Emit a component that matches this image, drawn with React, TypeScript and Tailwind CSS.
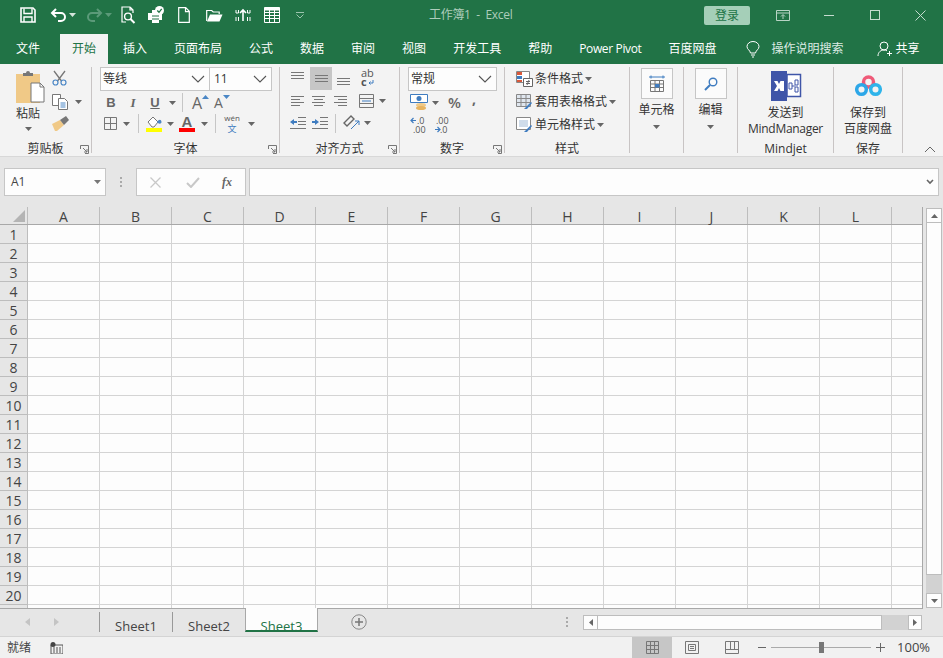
import React from "react";

const tabs = ["开始", "插入", "页面布局", "公式", "数据", "审阅", "视图", "开发工具", "帮助", "Power Pivot", "百度网盘"];
const columns = ["A", "B", "C", "D", "E", "F", "G", "H", "I", "J", "K", "L"];
const rows = Array.from({ length: 20 }, (_, i) => i + 1);

const Caret = ({ color = "#666" }: { color?: string }) => (
  <svg width="7" height="4" viewBox="0 0 7 4" className="shrink-0">
    <path d="M0 0h7L3.5 4z" fill={color} />
  </svg>
);

const Chevron = () => (
  <svg width="14" height="8" viewBox="0 0 14 8" className="shrink-0">
    <path d="M1 1l6 6 6-6" fill="none" stroke="#555" strokeWidth="1.1" />
  </svg>
);

const Launcher = () => (
  <svg width="9" height="9" viewBox="0 0 9 9" className="absolute right-[2px] bottom-[-1px]">
    <path d="M.5 4V.5H8.5V8.5H5M3 3l4 4M7 4v3H4" fill="none" stroke="#777" />
  </svg>
);

const VSep = () => <div className="h-[19px] w-px bg-[#c6c6c6] shrink-0" />;

const Lines = ({ d }: { d: string }) => (
  <svg width="15" height="15" viewBox="0 0 15 15" className="shrink-0">
    <path d={d} fill="none" stroke="#777" />
  </svg>
);

const Group = ({
  label,
  width,
  launcher,
  children,
}: {
  label: string;
  width: string;
  launcher?: boolean;
  children: React.ReactNode;
}) => (
  <div className={`${width} relative h-[86px] border-r border-[#c8c4c4] flex flex-col shrink-0`}>
    <div className="h-[69px]">{children}</div>
    <div className="h-[17px] pt-[5px] leading-[16px] text-center text-[12px] text-[#333]">{label}</div>
    {launcher && <Launcher />}
  </div>
);

function TitleBar() {
  return (
    <div className="h-[30px] flex items-center bg-[#217346] relative">
      <div className="flex items-center pl-[20px]">
        <svg width="16" height="16" viewBox="0 0 16 16">
          <path d="M1 1h12l2 2v12H1z" fill="none" stroke="#fff" strokeWidth="1.6" />
          <path d="M4 1.5v5h8v-5M4 15v-5h8v5" fill="none" stroke="#fff" strokeWidth="1.4" />
        </svg>
        <svg width="17" height="14" viewBox="0 0 17 14" className="ml-[14px]">
          <path d="M6 1L2 5l4 4M2 5h9a3.6 3.6 0 0 1 0 8H8" fill="none" stroke="#fff" strokeWidth="2" />
        </svg>
        <div className="ml-[2px]"><Caret color="#d5e5dc" /></div>
        <svg width="16" height="14" viewBox="0 0 16 14" className="ml-[11px]">
          <path d="M10 1l4 4-4 4M14 5H5a3.6 3.6 0 0 0 0 8h3" fill="none" stroke="#5b9a79" strokeWidth="2" />
        </svg>
        <div className="ml-[2px]"><Caret color="#5b9a79" /></div>
        <svg width="16" height="18" viewBox="0 0 16 18" className="ml-[8px]">
          <path d="M10 1H2v15h4M10 1l3 3v3M10 1v3h3" fill="none" stroke="#fff" strokeWidth="1.2" />
          <circle cx="8" cy="10.5" r="3.4" fill="none" stroke="#fff" strokeWidth="1.4" />
          <path d="M10.5 13l4 4" stroke="#fff" strokeWidth="2" />
        </svg>
        <svg width="18" height="18" viewBox="0 0 18 18" className="ml-[11px]">
          <path d="M1 7h4V4h7v3h3v7h-3v3H5v-3H1z" fill="#fff" />
          <circle cx="12.5" cy="4.5" r="4.5" fill="#fff" />
          <path d="M10.3 4.5l1.7 1.8 2.7-3.4" fill="none" stroke="#217346" strokeWidth="1.3" />
          <path d="M5 10h7M5 13h7" stroke="#217346" />
        </svg>
        <svg width="12" height="16" viewBox="0 0 12 16" className="ml-[13px]">
          <path d="M.7.7h7l3.6 3.6v11H.7zM7.5.7v4h3.8" fill="none" stroke="#fff" strokeWidth="1.2" />
        </svg>
        <svg width="17" height="13" viewBox="0 0 17 13" className="ml-[16px]">
          <path d="M.7 12V1.5h5l1.5 1.5h6v2" fill="none" stroke="#fff" strokeWidth="1.2" />
          <path d="M1 12.5L4 5.5h12.5l-3 7z" fill="#fff" />
        </svg>
        <svg width="16" height="14" viewBox="0 0 16 14" className="ml-[12px]">
          <path d="M8 13V2M5 5l3-3 3 3" fill="none" stroke="#fff" strokeWidth="1.6" />
          <path d="M1 2v3h2.5V2M12.5 2v3H15V2M1 9v4M3.5 9v4M12.5 9v4M15 9v4" fill="none" stroke="#fff" />
        </svg>
        <svg width="16" height="16" viewBox="0 0 16 16" className="ml-[13px]">
          <path d="M.5.500h15v15H.5zM.5 5.5h15M.5 8.5h15M.5 11.5h15M5.500 3v12.500M10.500 3v12.500" fill="none" stroke="#fff" />
          <path d="M.5.500h15v3H.5z" fill="#fff" />
        </svg>
        <svg width="10" height="7" viewBox="0 0 10 7" className="ml-[15px]">
          <path d="M1 .5h8M1.500 2.500L5 6l3.500-3.500" fill="none" stroke="#9cc5ae" />
        </svg>
      </div>
      <div className="absolute left-[429px] text-[12px] tracking-[-0.3px] text-[#aecdbb] whitespace-nowrap">工作簿1&nbsp; -&nbsp; Excel</div>
      <div className="ml-auto flex items-center pr-[17px]">
        <div className="w-[46px] h-[19px] rounded-[2px] bg-[#a5cfb8] text-[#217346] text-[12px] leading-[19px] text-center">登录</div>
        <svg width="14" height="11" viewBox="0 0 14 11" className="ml-[26px]">
          <path d="M.5.500h13v10H.5zM.5 3h13M7 9V5M5 6.500L7 4.500l2 2" fill="none" stroke="#b8d4c5" />
        </svg>
        <div className="ml-[34px] w-[10px] h-px bg-[#c5dcd0]" />
        <div className="ml-[36px] w-[10px] h-[10px] border border-[#c5dcd0]" />
        <svg width="11" height="11" viewBox="0 0 11 11" className="ml-[35px]">
          <path d="M.5.500l10 10M10.500.5l-10 10" stroke="#c5dcd0" />
        </svg>
      </div>
    </div>
  );
}

function TabBar() {
  return (
    <div className="h-[34px] flex items-end bg-[#217346] text-[12px] text-white relative">
      <div className="px-[12px] ml-[4px] mr-[8px] h-[30px] leading-[30px]">文件</div>
      <div className="flex gap-[3px]">
        {tabs.map((t, i) => (
          <div
            key={t}
            className={
              i === 0
                ? "h-[30px] px-[12px] leading-[30px] bg-[#f3f3f3] text-[#217346] whitespace-nowrap"
                : i === 9
                  ? "h-[30px] px-[12px] leading-[30px] tracking-[-0.35px] whitespace-nowrap"
                  : "h-[30px] px-[12px] leading-[30px] whitespace-nowrap"
            }
          >
            {t}
          </div>
        ))}
      </div>
      <div className="ml-[17px] h-[30px] flex items-center">
        <svg width="14" height="17" viewBox="0 0 14 17">
          <path d="M4.500 12C4 9 1 8.500 1 5.500a6 5 0 0 1 12 0C13 8.500 10 9 9.500 12zM5 14h4M6 16h2" fill="none" stroke="#fff" />
        </svg>
        <span className="ml-[12px] text-[12px] text-[#dcebe3] whitespace-nowrap">操作说明搜索</span>
        <svg width="16" height="16" viewBox="0 0 16 16" className="ml-[33px]">
          <circle cx="7" cy="5" r="4" fill="none" stroke="#fff" />
          <path d="M1 15c0-4 3-6 6-6 1 0 2 .2 3 .8M12.500 10v5M10 12.500h5" fill="none" stroke="#fff" />
        </svg>
        <span className="ml-[3px]">共享</span>
      </div>
    </div>
  );
}

function ClipboardGroup() {
  return (
    <Group label="剪贴板" width="w-[92px]" launcher>
      <div className="flex">
        <div className="w-[52px] flex flex-col items-center pl-[4px]">
          <svg width="29" height="32" viewBox="0 0 29 32" className="mt-[4px] ml-[4px] shrink-0">
            <path d="M0 3h24v29H0z" fill="#f0c987" />
            <path d="M7 5V2h3a2 2 0 0 1 4 0h3v3z" fill="#777" />
            <path d="M15 12h9l4 4v15H15z" fill="#fff" stroke="#777" />
            <path d="M24 12v4h4" fill="none" stroke="#777" />
          </svg>
          <div className="text-[12px] leading-[16px] mt-[3px] text-[#333]">粘贴</div>
          <div className="mt-[5px]"><Caret /></div>
        </div>
        <div className="flex flex-col">
          <svg width="15" height="16" viewBox="0 0 15 16" className="mt-[3px] shrink-0">
            <path d="M2 1l7.500 10M13 1L5.500 11" stroke="#777" strokeWidth="1.3" />
            <circle cx="3.500" cy="12.500" r="2.500" fill="none" stroke="#4a86c5" strokeWidth="1.2" />
            <circle cx="11.500" cy="12.500" r="2.500" fill="none" stroke="#4a86c5" strokeWidth="1.2" />
          </svg>
          <div className="flex items-center mt-[8px] gap-[6px]">
            <svg width="17" height="16" viewBox="0 0 17 16">
              <path d="M.5.500h8v11h-8z" fill="#fff" stroke="#777" />
              <path d="M6.500 4.500h6l3 3v8h-9z" fill="#fff" stroke="#777" />
              <path d="M8.500 9h5M8.500 11h5M8.500 13h5" stroke="#4a86c5" />
            </svg>
            <Caret />
          </div>
          <svg width="17" height="15" viewBox="0 0 17 15" className="mt-[6px] shrink-0">
            <path d="M0 8l8-4 4 5-7 6H3z" fill="#f0c987" />
            <path d="M8 4l6-4 3 4-5 5z" fill="#777" />
          </svg>
        </div>
      </div>
    </Group>
  );
}

function FontGroup() {
  return (
    <Group label="字体" width="w-[188px]" launcher>
      <div className="pl-[8px] flex flex-col">
        <div className="flex h-[24px] text-[12px] text-[#333]">
          <div className="w-[110px] flex items-center justify-between pl-[2px] pr-[4px] border border-[#c6c6c6] bg-[#fdfdfd]">
            等线
            <Chevron />
          </div>
          <div className="w-[62px] flex items-center justify-between pl-[4px] pr-[4px] border border-[#c6c6c6] border-l-0 bg-[#fdfdfd]">
            11
            <Chevron />
          </div>
        </div>
        <div className="flex items-center h-[21px] mt-[1px] text-[#666]">
          <div className="w-[22px] text-center text-[13px] font-bold [font-family:'Liberation_Sans',sans-serif]">B</div>
          <div className="w-[22px] text-center text-[13px] font-bold italic [font-family:'Liberation_Serif',serif]">I</div>
          <div className="w-[22px] text-center text-[13px] font-bold underline [font-family:'Liberation_Sans',sans-serif]">U</div>
          <div className="w-[12px] flex justify-center"><Caret /></div>
          <div className="ml-[4px]"><VSep /></div>
          <div className="ml-[9px] flex text-[16px] leading-[16px] w-[20px]">
            A
            <svg width="7" height="4" viewBox="0 0 7 4"><path d="M3.500 0L7 4H0z" fill="#4a86c5" /></svg>
          </div>
          <div className="ml-[2px] flex text-[14px] leading-[16px] items-end">
            A
            <svg width="7" height="4" viewBox="0 0 7 4" className="mb-[12px]"><path d="M0 0h7L3.500 4z" fill="#4a86c5" /></svg>
          </div>
        </div>
        <div className="flex items-center h-[21px]">
          <svg width="13" height="13" viewBox="0 0 13 13" className="ml-[4px]">
            <path d="M.5.500h12v12H.5zM6.500.5v12M.5 6.500h12" fill="none" stroke="#777" />
          </svg>
          <div className="ml-[6px]"><Caret /></div>
          <div className="ml-[8px]"><VSep /></div>
          <div className="ml-[7px] flex flex-col items-center">
            <svg width="16" height="12" viewBox="0 0 16 12">
              <path d="M2 6l5-5 5 5-4 5H6z" fill="#fff" stroke="#777" />
              <path d="M11 6c2-3 4-3 4.500 0 0 2-3 2.500-4.500 0z" fill="#4a86c5" />
            </svg>
            <div className="w-[16px] h-[4px] bg-[#ffff00]" />
          </div>
          <div className="ml-[5px]"><Caret /></div>
          <div className="ml-[5px] flex flex-col items-center w-[16px]">
            <div className="text-[15px] leading-[12px] font-bold text-[#666] [font-family:'Liberation_Sans',sans-serif]">A</div>
            <div className="w-[16px] h-[4px] bg-[#ff0000]" />
          </div>
          <div className="ml-[6px]"><Caret /></div>
          <div className="ml-[7px]"><VSep /></div>
          <div className="ml-[8px] flex flex-col items-center w-[16px]">
            <div className="text-[8px] leading-[10px] text-[#555]">wén</div>
            <div className="text-[9px] leading-[11px] text-[#3f7cc0]">文</div>
          </div>
          <div className="ml-[8px]"><Caret /></div>
        </div>
      </div>
    </Group>
  );
}

function AlignGroup() {
  return (
    <Group label="对齐方式" width="w-[120px]" launcher>
      <div className="pl-[10px] flex flex-col">
        <div className="flex items-center h-[23px]">
          <div className="w-[20px]"><Lines d="M1 1.500h13M1 4.500h13M1 7.500h13" /></div>
          <div className="w-[22px] h-[23px] bg-[#c6c6c6] flex items-center justify-center"><Lines d="M1 4.500h13M1 7.500h13M1 10.500h13" /></div>
          <div className="w-[26px] pl-[4px]"><Lines d="M1 7.500h13M1 10.500h13M1 13.500h13" /></div>
          <svg width="14" height="18" viewBox="0 0 14 18" className="ml-[2px] -mt-[2px] overflow-visible">
            <text x="1" y="8" fontSize="11" fill="#555">ab</text>
            <text x="1" y="17" fontSize="11" fontWeight="700" fill="#555">c</text>
            <path d="M13 11v3H9M10.500 12.500L9 14l1.500 1.500" fill="none" stroke="#3f7cc0" />
          </svg>
        </div>
        <div className="flex items-center h-[21px]">
          <div className="w-[21px]"><Lines d="M1 3.500h13M1 6.500h9M1 9.500h13M1 12.500h9" /></div>
          <div className="w-[22px]"><Lines d="M1 3.500h13M3 6.500h9M1 9.500h13M3 12.500h9" /></div>
          <div className="w-[26px]"><Lines d="M1 3.500h13M5 6.500h9M1 9.500h13M5 12.500h9" /></div>
          <svg width="15" height="14" viewBox="0 0 15 14">
            <path d="M.5.500h14v13H.5zM.5 4.500h14M.5 9.500h14" fill="none" stroke="#777" />
            <path d="M3 7h9" stroke="#3f7cc0" />
          </svg>
          <div className="ml-[5px]"><Caret /></div>
        </div>
        <div className="flex items-center h-[24px]">
          <svg width="16" height="12" viewBox="0 0 16 12">
            <path d="M8 .5h8M8 4.500h8M8 7.500h8M0 11.500h16" stroke="#777" />
            <path d="M0 5l4-3v2h3v2H4v2z" fill="#3f7cc0" />
          </svg>
          <svg width="16" height="12" viewBox="0 0 16 12" className="ml-[6px]">
            <path d="M8 .5h8M8 4.500h8M8 7.500h8M0 11.500h16" stroke="#777" />
            <path d="M7 5L3 2v2H0v2h3v2z" fill="#3f7cc0" />
          </svg>
          <div className="ml-[7px]"><VSep /></div>
          <svg width="18" height="16" viewBox="0 0 18 16" className="ml-[7px]">
            <path d="M1 8l7-7 3 3-7 7z" fill="none" stroke="#666" strokeWidth="1.400" />
            <path d="M8 14L16 6M16 6h-4M16 6v4" fill="none" stroke="#3f7cc0" />
          </svg>
          <div className="ml-[3px]"><Caret /></div>
        </div>
      </div>
    </Group>
  );
}

function NumberGroup() {
  return (
    <Group label="数字" width="w-[105px]" launcher>
      <div className="pl-[8px] flex flex-col">
        <div className="w-[89px] h-[24px] flex items-center justify-between pl-[2px] pr-[4px] border border-[#c6c6c6] bg-[#fdfdfd] text-[12px] text-[#333]">
          常规
          <Chevron />
        </div>
        <div className="flex items-center h-[21px] mt-[1px] pl-[2px]">
          <svg width="18" height="17" viewBox="0 0 18 17">
            <path d="M.5.500h17v8H.5z" fill="#fff" stroke="#3f7cc0" />
            <circle cx="9" cy="4.500" r="2.500" fill="#3f7cc0" />
            <ellipse cx="11" cy="11" rx="5" ry="2" fill="#f0c987" />
            <ellipse cx="11" cy="14" rx="5" ry="2" fill="#e8b460" />
          </svg>
          <div className="ml-[4px]"><Caret /></div>
          <div className="ml-[9px] text-[15px] text-[#666] leading-none font-semibold">%</div>
          <div className="ml-[11px] text-[14px] text-[#666] font-bold leading-none mb-[8px]">,</div>
        </div>
        <div className="flex items-center h-[23px] pl-[3px]">
          <svg width="15" height="18" viewBox="0 0 15 18" className="overflow-visible">
            <path d="M0 4.500h5M2.500 2L0 4.500 2.500 7" fill="none" stroke="#3f7cc0" strokeWidth="1.200" />
            <text x="6" y="8" fontSize="9" fill="#555">.0</text>
            <text x="2" y="17" fontSize="9" fill="#555">.00</text>
          </svg>
          <svg width="15" height="18" viewBox="0 0 15 18" className="ml-[8px] overflow-visible">
            <text x="2" y="8" fontSize="9" fill="#555">.00</text>
            <path d="M1 13.500h5M3.500 11L6 13.500 3.500 16" fill="none" stroke="#3f7cc0" strokeWidth="1.200" />
            <text x="6" y="17" fontSize="9" fill="#555">.0</text>
          </svg>
        </div>
      </div>
    </Group>
  );
}

const StyleRow = ({ icon, text }: { icon: React.ReactNode; text: string }) => (
  <div className="flex items-center h-[23px] text-[12px] text-[#333]">
    {icon}
    <span className="ml-[2px] whitespace-nowrap">{text}</span>
    <div className="ml-[2px]"><Caret /></div>
  </div>
);

function StylesGroup() {
  return (
    <Group label="样式" width="w-[125px]">
      <div className="pl-[11px]">
        <StyleRow
          text="条件格式"
          icon={
            <svg width="17" height="16" viewBox="0 0 17 16">
              <path d="M.5.500h13v11H.5z" fill="#fff" stroke="#888" />
              <path d="M1 1h5v3H1z" fill="#d9583b" />
              <path d="M1 5h5v3H1z" fill="#3f7cc0" />
              <path d="M1 9h5v2H1z" fill="#d9583b" />
              <path d="M7.500 7.500h9v8h-9z" fill="#fff" stroke="#666" />
              <path d="M10 10.500h4M10 12.500h4M13 9l-2 5" fill="none" stroke="#666" />
            </svg>
          }
        />
        <StyleRow
          text="套用表格格式"
          icon={
            <svg width="17" height="16" viewBox="0 0 17 16">
              <path d="M.5.500h14v12H.5zM.5 4.500h14M.5 8.500h14M5 .5v12M10 .5v12" fill="#dfe6ee" stroke="#888" />
              <path d="M8 15l7-7 1 1-5 6z" fill="#3f7cc0" />
            </svg>
          }
        />
        <StyleRow
          text="单元格样式"
          icon={
            <svg width="17" height="16" viewBox="0 0 17 16">
              <path d="M.5.500h14v12H.5z" fill="#fff" stroke="#888" />
              <path d="M3 3h9v7H3z" fill="#cfdcea" />
              <path d="M8 15l7-7 1 1-5 6z" fill="#3f7cc0" />
            </svg>
          }
        />
      </div>
    </Group>
  );
}

const BoxButton = ({ icon, text, width }: { icon: React.ReactNode; text: string; width: string }) => (
  <div className={`${width} relative h-[86px] border-r border-[#c8c4c4] flex flex-col items-center pt-[1px] shrink-0`}>
    <div className="w-[32px] h-[31px] border border-[#c6c6c6] bg-[#fbfbfb] flex items-center justify-center">{icon}</div>
    <div className="mt-[3px] text-[12px] leading-[16px] text-[#333]">{text}</div>
    <div className="mt-[7px]"><Caret /></div>
  </div>
);

function Ribbon() {
  return (
    <div className="h-[93px] pt-[3px] flex bg-[#f3f3f3] border-b border-[#d8d8d8] relative">
      <ClipboardGroup />
      <FontGroup />
      <AlignGroup />
      <NumberGroup />
      <StylesGroup />
      <BoxButton
        text="单元格"
        width="w-[54px]"
        icon={
          <svg width="16" height="18" viewBox="0 0 16 18">
            <path d="M1.500 5.500h13v11h-13zM1.500 9h13M1.500 12.500h13M6 5.500v11M10.500 5.500v11" fill="none" stroke="#777" />
            <path d="M6 9h4.500v3.500H6z" fill="#3f7cc0" />
            <path d="M0 2h16M2 .5v3M14 .5v3" stroke="#3f7cc0" />
          </svg>
        }
      />
      <BoxButton
        text="编辑"
        width="w-[54px]"
        icon={
          <svg width="14" height="14" viewBox="0 0 14 14">
            <circle cx="9" cy="5" r="3.800" fill="none" stroke="#3f7cc0" strokeWidth="1.400" />
            <path d="M6 8l-5 5" stroke="#3f7cc0" strokeWidth="2" />
          </svg>
        }
      />
      <div className="w-[96px] h-[86px] border-r border-[#c8c4c4] flex flex-col items-center shrink-0 text-[12px] text-[#333]">
        <svg width="31" height="30" viewBox="0 0 31 30" className="mt-[4px] ml-[1px] shrink-0">
          <path d="M0 0h16v30H0z" fill="#3f55a8" />
          <path d="M16 3.500h13.500v22H16z" fill="#fff" stroke="#3f55a8" strokeWidth="1.500" />
          <path d="M3 10h3.500L8 13l1.500-3H13v10H9.500L8 17l-1.500 3H3l3-5z" fill="#fff" />
          <path d="M18 12h3v6h-3zM24 9h3v5h-3zM24 16h3v5h-3zM21 15h3" fill="none" stroke="#3f55a8" />
        </svg>
        <div className="mt-[4px] leading-[16px] shrink-0">发送到</div>
        <div className="leading-[16px] tracking-[-0.3px] shrink-0">MindManager</div>
        <div className="leading-[16px] mt-[4px] shrink-0">Mindjet</div>
      </div>
      <div className="w-[69px] h-[86px] border-r border-[#c8c4c4] flex flex-col items-center shrink-0 text-[12px] text-[#333]">
        <svg width="27" height="22" viewBox="0 0 27 22" className="mt-[8px] shrink-0">
          <circle cx="13.500" cy="7" r="5" fill="none" stroke="#ef5a78" strokeWidth="3.500" />
          <circle cx="6.500" cy="14.500" r="4.800" fill="none" stroke="#2da7e8" strokeWidth="3.500" />
          <circle cx="20.500" cy="14.500" r="4.800" fill="none" stroke="#2fb4ea" strokeWidth="3.500" />
        </svg>
        <div className="mt-[8px] leading-[16px] shrink-0">保存到</div>
        <div className="leading-[16px] shrink-0">百度网盘</div>
        <div className="leading-[16px] mt-[4px] shrink-0">保存</div>
      </div>
      <svg width="12" height="7" viewBox="0 0 12 7" className="absolute right-[7px] bottom-[3px]">
        <path d="M1 6l5-5 5 5" fill="none" stroke="#666" />
      </svg>
    </div>
  );
}

function FormulaBar() {
  return (
    <div className="h-[50px] bg-[#e6e6e6] flex items-start pt-[11px] pl-[4px] pr-[4px] text-[#444]">
      <div className="w-[102px] h-[28px] bg-[#fdfdfd] border border-[#c6c6c6] flex items-center justify-between pl-[6px] pr-[4px] text-[12px]">
        A1
        <Caret color="#777" />
      </div>
      <div className="w-[30px] h-[28px] flex flex-col items-center justify-center gap-[2px]">
        <div className="w-[2px] h-[2px] bg-[#aaa]" />
        <div className="w-[2px] h-[2px] bg-[#aaa]" />
        <div className="w-[2px] h-[2px] bg-[#aaa]" />
      </div>
      <div className="w-[110px] h-[28px] bg-[#fdfdfd] border border-[#c6c6c6] flex items-center">
        <svg width="11" height="11" viewBox="0 0 11 11" className="ml-[13px]">
          <path d="M.5.500l10 10M10.500.5l-10 10" stroke="#c8c8c8" strokeWidth="1.300" />
        </svg>
        <svg width="14" height="11" viewBox="0 0 14 11" className="ml-[25px]">
          <path d="M1 6l4 4 8-9" fill="none" stroke="#c8c8c8" strokeWidth="2" />
        </svg>
        <span className="ml-[22px] text-[12px] font-bold italic text-[#666] [font-family:'Liberation_Serif',serif]">fx</span>
      </div>
      <div className="ml-[3px] flex-1 h-[28px] bg-[#fdfdfd] border border-[#c6c6c6] flex items-center justify-end pr-[4px]">
        <svg width="8" height="6" viewBox="0 0 8 6">
          <path d="M1 1l3 3 3-3" fill="none" stroke="#666" strokeWidth="1.600" />
        </svg>
      </div>
    </div>
  );
}

function Sheet() {
  return (
    <div className="w-[923px] h-[401px] overflow-hidden border-r border-[#a8a8a8] shrink-0">
      <div className="flex h-[18px] bg-[#e6e6e6] border-b border-[#a8a8a8] text-[14px] leading-[20px] text-[#444]">
        <div className="w-[28px] border-r border-[#bdbdbd] relative shrink-0 flex items-end justify-end pr-[2px] pb-[2px]">
          <svg width="12" height="12" viewBox="0 0 12 12">
            <path d="M12 0v12H0z" fill="#b4b4b4" />
          </svg>
        </div>
        {columns.map((c) => (
          <div key={c} className="w-[72px] text-center border-r border-[#bdbdbd] shrink-0">{c}</div>
        ))}
      </div>
      {rows.map((r) => (
        <div key={r} className="flex h-[19px]">
          <div className="w-[28px] bg-[#e6e6e6] border-r border-b border-[#bdbdbd] text-[14px] leading-[18px] pt-px text-center text-[#444] shrink-0">{r}</div>
          {columns.map((c) => (
            <div key={c} className="w-[72px] bg-[#fdfdfd] border-r border-b border-[#d4d4d4] shrink-0" />
          ))}
          <div className="flex-1 bg-[#fdfdfd] border-b border-[#d4d4d4]" />
        </div>
      ))}
      <div className="flex h-[3px]">
        <div className="w-[28px] bg-[#e6e6e6] border-r border-[#bdbdbd] shrink-0" />
        {columns.map((c) => (
          <div key={c} className="w-[72px] bg-[#fdfdfd] border-r border-[#d4d4d4] shrink-0" />
        ))}
        <div className="flex-1 bg-[#fdfdfd]" />
      </div>
    </div>
  );
}

function VScroll() {
  return (
    <div className="ml-[3px] w-[16px] h-[401px] flex flex-col pt-[1px] shrink-0">
      <div className="h-[15px] bg-[#fdfdfd] border border-[#bdbdbd] flex items-center justify-center">
        <svg width="7" height="4" viewBox="0 0 7 4"><path d="M3.500 0L7 4H0z" fill="#666" /></svg>
      </div>
      <div className="h-[352px] bg-[#fdfdfd] border-x border-b border-[#bdbdbd]" />
      <div className="flex-1 bg-[#d2d2d2]" />
      <div className="h-[15px] bg-[#fdfdfd] border border-[#bdbdbd] flex items-center justify-center">
        <Caret />
      </div>
    </div>
  );
}

function SheetTabs() {
  return (
    <div className="h-[28px] flex bg-[#e6e6e6] text-[13px] text-[#444]">
      <div className="w-[99px] border-t border-[#a8a8a8] flex items-center pb-[2px] pl-[25px] gap-[24px]">
        <svg width="5" height="8" viewBox="0 0 5 8"><path d="M5 0v8L0 4z" fill="#c4c4c4" /></svg>
        <svg width="5" height="8" viewBox="0 0 5 8"><path d="M0 0v8l5-4z" fill="#c4c4c4" /></svg>
      </div>
      <div className="w-[73px] border-t border-[#a8a8a8] pt-[3px]">
        <div className="h-[20px] border-l border-[#999] pt-[6px] leading-[16px] text-center">Sheet1</div>
      </div>
      <div className="w-[73px] border-t border-[#a8a8a8] pt-[3px]">
        <div className="h-[20px] border-l border-[#999] pt-[6px] leading-[16px] text-center">Sheet2</div>
      </div>
      <div className="w-[73px] h-[24px] bg-[#fdfdfd] border-x border-[#a8a8a8] border-b-2 border-b-[#217346] pt-[10px] leading-[16px] text-center text-[#217346]">Sheet3</div>
      <div className="w-[605px] border-t border-[#a8a8a8] flex items-center pb-[1px]">
        <svg width="16" height="16" viewBox="0 0 16 16" className="ml-[33px]">
          <circle cx="8" cy="8" r="7.200" fill="none" stroke="#888" />
          <path d="M8 4v8M4 8h8" stroke="#777" strokeWidth="1.500" />
        </svg>
        <div className="ml-[199px] flex flex-col gap-[2px]">
          <div className="w-[2px] h-[2px] bg-[#aaa]" />
          <div className="w-[2px] h-[2px] bg-[#aaa]" />
          <div className="w-[2px] h-[2px] bg-[#aaa]" />
        </div>
        <div className="ml-[15px] w-[339px] h-[15px] flex">
          <div className="w-[15px] bg-[#fdfdfd] border border-[#bdbdbd] flex items-center justify-center">
            <svg width="4" height="7" viewBox="0 0 4 7"><path d="M4 0v7L0 3.500z" fill="#666" /></svg>
          </div>
          <div className="w-[284px] bg-[#fdfdfd] border-y border-r border-[#bdbdbd]" />
          <div className="flex-1 bg-[#d2d2d2]" />
          <div className="w-[14px] bg-[#fdfdfd] border border-[#bdbdbd] flex items-center justify-center">
            <svg width="4" height="7" viewBox="0 0 4 7"><path d="M0 0v7l4-3.500z" fill="#666" /></svg>
          </div>
        </div>
      </div>
    </div>
  );
}

function StatusBar() {
  return (
    <div className="h-[22px] flex items-center bg-[#f1f1f1] border-t border-[#d4d4d4] text-[12px] text-[#444]">
      <span className="ml-[7px]">就绪</span>
      <svg width="13" height="12" viewBox="0 0 13 12" className="ml-[19px]">
        <path d="M1 3h12v9H1z" fill="none" stroke="#555" />
        <path d="M3 6h8M3 8h8M3 10h8" stroke="#555" strokeDasharray="2 1" />
        <circle cx="3" cy="2.500" r="2.500" fill="#444" />
      </svg>
      <div className="ml-[569px] w-[40px] h-[21px] bg-[#c6c6c6] flex items-center justify-center">
        <svg width="13" height="13" viewBox="0 0 13 13">
          <path d="M.5.500h12v12H.5zM4.500.5v12M8.500.5v12M.5 4.500h12M.5 8.500h12" fill="none" stroke="#777" />
        </svg>
      </div>
      <svg width="14" height="13" viewBox="0 0 14 13" className="ml-[13px]">
        <path d="M.5.500h13v12H.5zM3.500 3.500h7v6h-7zM5 5.500h4M5 7.500h4" fill="none" stroke="#777" />
      </svg>
      <svg width="14" height="13" viewBox="0 0 14 13" className="ml-[26px]">
        <path d="M.5.500h13v12H.5zM.5 8.500h13M5.500.5v8M9.500.5v8" fill="none" stroke="#777" />
      </svg>
      <div className="ml-[19px] w-[8px] h-px bg-[#666]" />
      <div className="ml-[5px] w-[100px] h-px bg-[#aaa] flex items-center pl-[48px]">
        <div className="w-[5px] h-[11px] bg-[#777] shrink-0" />
      </div>
      <svg width="9" height="9" viewBox="0 0 9 9" className="ml-[5px]">
        <path d="M4.500 0v9M0 4.500h9" stroke="#666" />
      </svg>
      <span className="ml-[12px] text-[13px]">100%</span>
    </div>
  );
}

export default function App() {
  return (
    <div className="w-[943px] h-[658px] overflow-hidden bg-[#e6e6e6] [font-family:'Open_Sans','Noto_Sans_CJK_SC',sans-serif]">
      <TitleBar />
      <TabBar />
      <Ribbon />
      <FormulaBar />
      <div className="flex">
        <Sheet />
        <VScroll />
      </div>
      <SheetTabs />
      <StatusBar />
    </div>
  );
}
